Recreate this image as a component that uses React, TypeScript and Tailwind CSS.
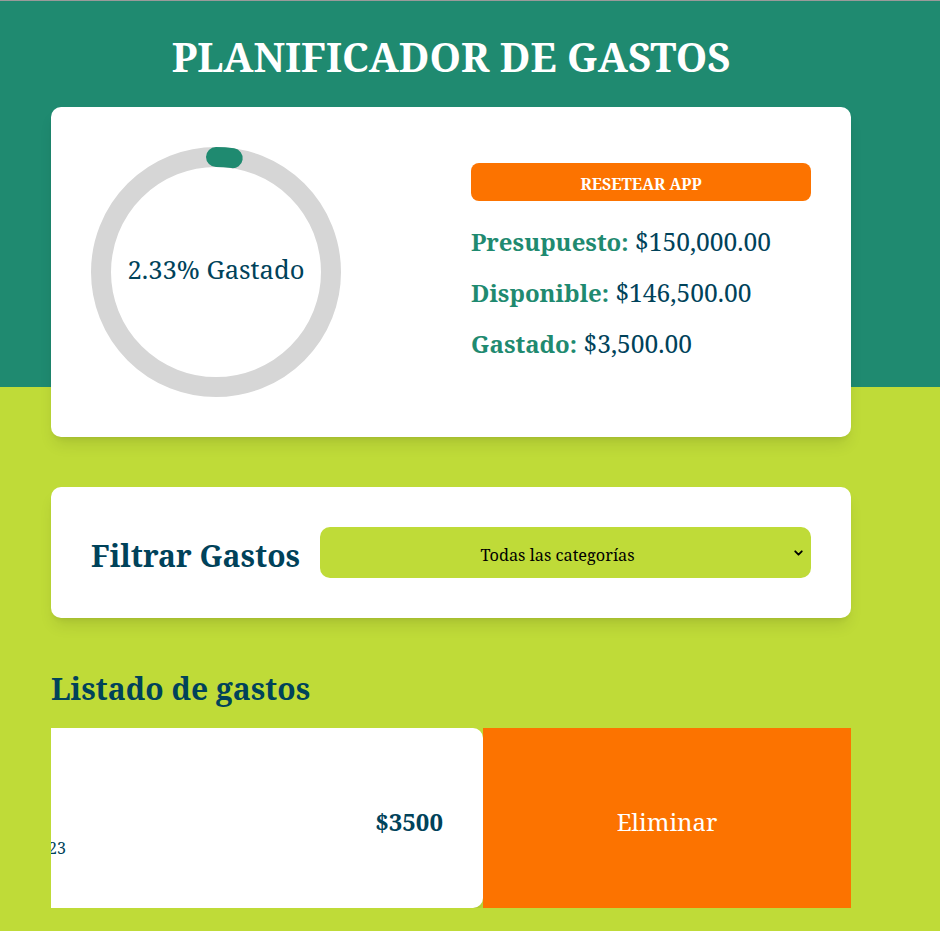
import { ChevronDown } from "lucide-react";

const budget = 150000;
const spent = 3500;
const available = budget - spent;
const percentage = Number(((spent / budget) * 100).toFixed(2));

const formatCurrency = (amount: number) =>
  new Intl.NumberFormat("en-US", { style: "currency", currency: "USD" }).format(amount);

const ProgressRing = ({ value }: { value: number }) => {
  const r = 115;
  const c = 2 * Math.PI * r;
  return (
    <div className="relative w-[250px] h-[250px]">
      <svg viewBox="0 0 250 250" className="w-full h-full -rotate-90">
        <circle cx="125" cy="125" r={r} fill="none" stroke="#d6d6d6" strokeWidth="20" />
        <circle
          cx="125"
          cy="125"
          r={r}
          fill="none"
          stroke="#1F8A70"
          strokeWidth="20"
          strokeLinecap="round"
          strokeDasharray={`${(c * value) / 100} ${c}`}
        />
      </svg>
      <p className="absolute inset-0 pb-[4px] flex items-center justify-center text-[25.6px] text-[#00425A]">
        {value}% Gastado
      </p>
    </div>
  );
};

export default function App() {
  return (
    <div
      className="min-h-screen bg-[#BFDB38] border-t border-[#9a9a9a]"
      style={{ fontFamily: '"Noto Serif", "DejaVu Serif", serif' }}
    >
      <header className="bg-[#1F8A70] h-[386px]">
        <div className="ml-[51px] w-[800px] h-[106px] pt-[6px] flex items-center justify-center">
          <h1 className="text-[40px] leading-none font-bold text-white">PLANIFICADOR DE GASTOS</h1>
        </div>
      </header>

      <main className="ml-[51px] w-[800px] -mt-[280px] pb-6">
        {/* Budget tracker */}
        <div className="bg-white rounded-[10px] shadow-lg p-10 grid grid-cols-2 gap-10">
          <ProgressRing value={percentage} />
          <div className="pt-4 flex flex-col">
            <button className="w-full h-[38px] pt-[5px] rounded-lg bg-[#FC7300] text-white text-[15.8px] font-bold uppercase">
              Resetear app
            </button>
            <div className="mt-[23px] flex flex-col gap-[15px] text-[24px] leading-[36px] text-[#00425A]">
              <p>
                <span className="font-bold text-[#1F8A70]">Presupuesto:</span>{" "}
                <span className="text-[24.6px]">{formatCurrency(budget)}</span>
              </p>
              <p>
                <span className="font-bold text-[#1F8A70]">Disponible:</span>{" "}
                <span className="text-[24.6px]">{formatCurrency(available)}</span>
              </p>
              <p>
                <span className="font-bold text-[#1F8A70]">Gastado:</span>{" "}
                <span className="text-[24.6px]">{formatCurrency(spent)}</span>
              </p>
            </div>
          </div>
        </div>

        {/* Filter */}
        <div className="mt-[50px] bg-white rounded-[10px] shadow-lg p-10 flex items-center gap-5">
          <label
            htmlFor="category"
            className="pt-[6px] text-[30px] font-bold text-[#00425A] whitespace-nowrap"
          >
            Filtrar Gastos
          </label>
          <div className="relative flex-1">
            <select
              id="category"
              className="w-full h-[51px] pt-[6px] pr-4 rounded-[10px] bg-[#BFDB38] text-[16.3px] text-black text-center appearance-none outline-none"
            >
              <option value="">Todas las categorías</option>
              <option value="ahorro">Ahorro</option>
              <option value="comida">Comida</option>
              <option value="casa">Casa</option>
            </select>
            <ChevronDown
              className="absolute right-[6px] top-1/2 -translate-y-1/2 w-[13px] h-[13px] text-black pointer-events-none"
              strokeWidth={3.5}
            />
          </div>
        </div>

        {/* Expense list */}
        <h2 className="mt-[47px] text-[30px] leading-[48px] font-bold text-[#00425A]">Listado de gastos</h2>
        <div className="mt-[15px] flex h-[180px] overflow-hidden">
          <div className="w-[432px] pt-2 bg-white rounded-r-[10px] shadow-lg flex items-center">
            <div className="w-[300px] -ml-[285px] shrink-0 pt-[52px] text-right text-[16px] leading-6 whitespace-nowrap text-[#00425A]">
              Agregado el: 5 de septiembre de 2023
            </div>
            <p className="flex-1 text-right pr-10 text-[24px] font-bold text-[#00425A]">$3500</p>
          </div>
          <button className="flex-1 pt-2 bg-[#FC7300] text-white text-[24px]">Eliminar</button>
        </div>
      </main>
    </div>
  );
}
